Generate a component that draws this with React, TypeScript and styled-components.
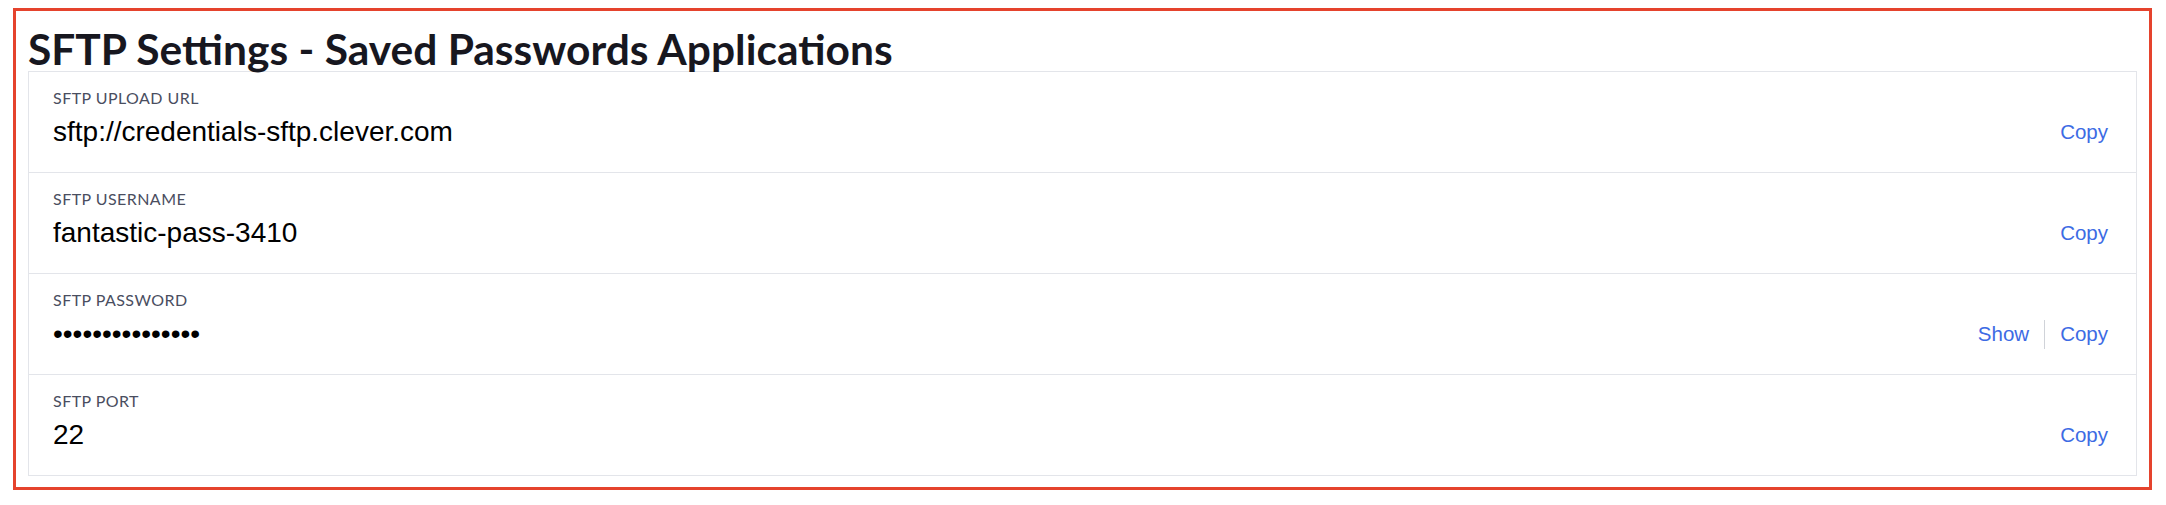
import React from "react";
import styled, { createGlobalStyle } from "styled-components";

const GlobalStyle = createGlobalStyle`
  html, body {
    margin: 0;
    padding: 0;
    background: #ffffff;
  }
  body {
    font-family: "Liberation Sans", Arial, sans-serif;
  }
`;

const Frame = styled.section`
  margin: 8px 14px 14px 13px;
  border: 3px solid #e5432d;
  padding: 16px 12px 11px 12px;
  box-sizing: border-box;
`;

const Title = styled.h1`
  position: relative;
  z-index: 1;
  margin: 0 0 1px 0;
  font-family: Lato, "Noto Sans", sans-serif;
  font-weight: 700;
  font-size: 42.5px;
  line-height: 43px;
  color: #17171f;
  letter-spacing: 0;
`;

const Card = styled.div`
  border: 1px solid #e3e5ea;
  background: #ffffff;
`;

const Row = styled.div`
  padding: 16px 28px 22px 24px;
  display: flex;
  flex-direction: column;
  gap: 6px;
  & + & {
    border-top: 1px solid #e3e5ea;
  }
`;

const Label = styled.div`
  font-family: Lato, "Noto Sans", sans-serif;
  font-size: 16px;
  line-height: 20px;
  letter-spacing: 0.45px;
  color: #4a4e5f;
  text-transform: uppercase;
`;

const ValueLine = styled.div`
  display: flex;
  align-items: center;
  justify-content: space-between;
`;

const Value = styled.div`
  font-family: "Liberation Sans", Arial, sans-serif;
  font-size: 28px;
  line-height: 36px;
  color: #000000;
`;

const Actions = styled.div`
  display: flex;
  align-items: center;
`;

const ActionButton = styled.button<{ $side: "left" | "right" | "single" }>`
  background: none;
  border: none;
  margin: 0;
  padding: ${(p) =>
    p.$side === "left" ? "0 15px 0 0" : p.$side === "right" ? "0 0 0 15px" : "0"};
  font-family: "Liberation Sans", Arial, sans-serif;
  font-size: 20.5px;
  line-height: 24px;
  color: #3d6be4;
  cursor: pointer;
`;

const Divider = styled.span`
  width: 1px;
  height: 29px;
  background: #d0d3d9;
`;

type Field = { label: string; value: string; secret?: boolean };

const fields: Field[] = [
  { label: "SFTP Upload URL", value: "sftp://credentials-sftp.clever.com" },
  { label: "SFTP Username", value: "fantastic-pass-3410" },
  { label: "SFTP Password", value: "•••••••••••••••", secret: true },
  { label: "SFTP Port", value: "22" },
];

export default function App() {
  return (
    <>
      <GlobalStyle />
      <Frame>
        <Title>SFTP Settings - Saved Passwords Applications</Title>
        <Card>
          {fields.map((f) => (
            <Row key={f.label}>
              <Label>{f.label}</Label>
              <ValueLine>
                <Value>{f.value}</Value>
                <Actions>
                  {f.secret ? (
                    <>
                      <ActionButton $side="left">Show</ActionButton>
                      <Divider />
                      <ActionButton $side="right">Copy</ActionButton>
                    </>
                  ) : (
                    <ActionButton $side="single">Copy</ActionButton>
                  )}
                </Actions>
              </ValueLine>
            </Row>
          ))}
        </Card>
      </Frame>
    </>
  );
}
